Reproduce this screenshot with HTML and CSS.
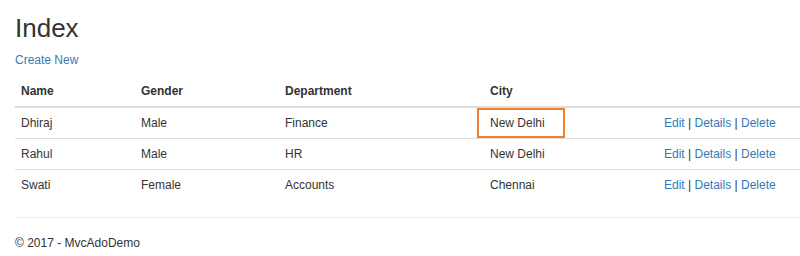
FILE: index.html
```html
<!DOCTYPE html>
<html lang="en">
<head>
    <meta charset="UTF-8" />
    <title>Index - MvcAdoDemo</title>
    <link rel="stylesheet" href="styles.css">
</head>
<body>
    <div class="container body-content">
        <h2>Index</h2>
        <p><a href="#">Create New</a></p>

        <table class="table">
            <colgroup>
                <col class="c-name">
                <col class="c-gender">
                <col class="c-dept">
                <col class="c-city">
                <col>
            </colgroup>
            <thead>
                <tr>
                    <th>Name</th>
                    <th>Gender</th>
                    <th>Department</th>
                    <th>City</th>
                    <th></th>
                </tr>
            </thead>
            <tbody>
                <tr>
                    <td>Dhiraj</td>
                    <td>Male</td>
                    <td>Finance</td>
                    <td class="highlight">New Delhi</td>
                    <td><a href="#">Edit</a> | <a href="#">Details</a> | <a href="#">Delete</a></td>
                </tr>
                <tr>
                    <td>Rahul</td>
                    <td>Male</td>
                    <td>HR</td>
                    <td>New Delhi</td>
                    <td><a href="#">Edit</a> | <a href="#">Details</a> | <a href="#">Delete</a></td>
                </tr>
                <tr>
                    <td>Swati</td>
                    <td>Female</td>
                    <td>Accounts</td>
                    <td>Chennai</td>
                    <td><a href="#">Edit</a> | <a href="#">Details</a> | <a href="#">Delete</a></td>
                </tr>
            </tbody>
        </table>

        <hr />
        <footer>
            <p>&copy; 2017 - MvcAdoDemo</p>
        </footer>
    </div>
</body>
</html>
```

FILE: styles.css
```css
html, body { margin: 0; }
body { font-family: "Liberation Sans", Arial, sans-serif; font-size: 12px; line-height: 17px; color: #333; background: #fff; }
.container { width: 785px; padding-left: 15px; }
h2 { font-size: 26px; font-weight: 500; line-height: 28.6px; margin: 14px 0 9px; }
p { margin: 0 0 7px; }
a { color: #337ab7; text-decoration: none; }
a:hover { text-decoration: underline; }

/* Table */
.table { width: 100%; border-collapse: collapse; table-layout: fixed; margin-bottom: 17px; }
.table th, .table td { padding: 7px 6px 6px; text-align: left; vertical-align: top; }
.table th { font-weight: bold; border-bottom: 2px solid #ddd; }
.table td { border-top: 1px solid #ddd; }
.table thead + tbody tr:first-child td { border-top: 0; }
.c-name { width: 120px; }
.c-gender { width: 144px; }
.c-dept { width: 205px; }
.c-city { width: 174px; }

/* annotation box round the first city */
.highlight { position: relative; }
.highlight::after {
    content: "";
    position: absolute;
    left: -7px;
    top: 0;
    bottom: 0;
    width: 88px;
    border: 2px solid #f07f2b;
    box-sizing: border-box;
}

hr { border: 0; border-top: 1px solid #eee; margin: 0 0 17px; }
footer p { margin: 0; }
```
